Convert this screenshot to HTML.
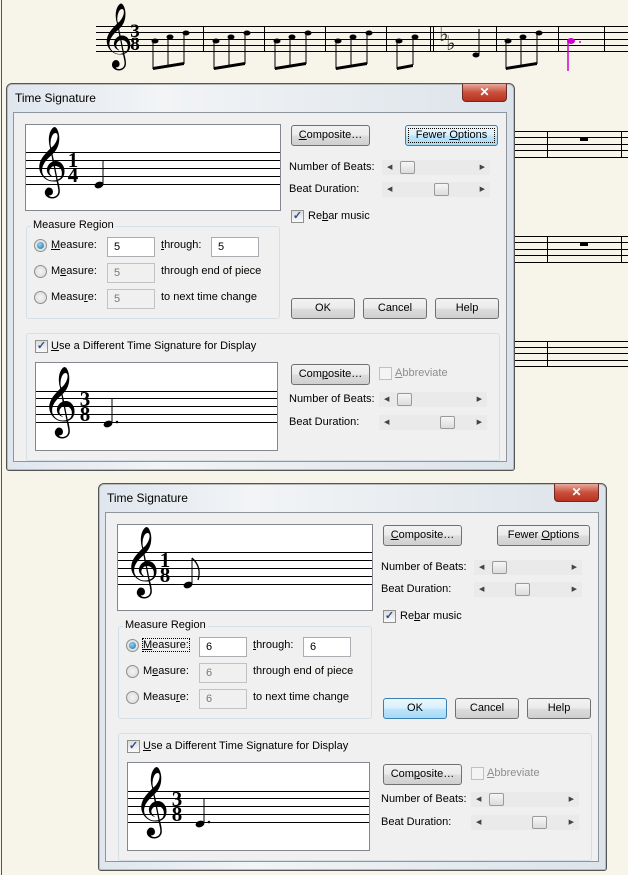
<!DOCTYPE html>
<html><head><meta charset="utf-8">
<style>
*{box-sizing:border-box;margin:0;padding:0}
body{width:628px;height:875px;overflow:hidden;background:#f7f5ea;position:relative;font-family:"Liberation Sans",sans-serif;font-size:11px;color:#000}
.a{position:absolute;white-space:nowrap}
.sl{position:absolute;height:1px;background:#000}
.bl{position:absolute;width:1px;background:#000}
.dlg{position:absolute;width:509px;height:388px;border:1px solid #555;border-radius:6px 6px 3px 3px;background:linear-gradient(90deg,#dfe6ee 0%,#f2f4f6 30%,#e9edf1 60%,#dce3ea 100%);box-shadow:0 0 0 1px #bbb inset}
.ttl{position:absolute;left:8px;top:7px;font-size:12px}
.cls{position:absolute;left:455px;top:0;width:45px;height:18px;border:1px solid #6b2a22;border-top:none;border-radius:0 0 4px 4px;background:linear-gradient(#e8a89d,#c9503c 50%,#b8321e);color:#fff;font-weight:bold;text-align:center;font-size:12px;line-height:17px}
.cli{position:absolute;left:7px;top:29px;width:494px;height:350px;background:#f0f0f0;border:1px solid #8e959c}
.pv{position:absolute;background:#fff;border:1px solid #828790;overflow:hidden}
.grp{position:absolute;border:1px solid #d5dfe5;border-radius:3px}
.gl{position:absolute;background:#f0f0f0;padding:0 2px;top:-8px;left:4px;white-space:nowrap}
.btn{position:absolute;height:21px;border:1px solid #707070;border-radius:3px;background:linear-gradient(#f2f2f2 0%,#ebebeb 50%,#dddddd 51%,#cfcfcf 100%);text-align:center;line-height:19px;white-space:nowrap}
.def{border-color:#3c7fb1;background:linear-gradient(#eaf6fd 0%,#d9f0fc 50%,#bee6fd 51%,#a7d9f5 100%)}
.inp{position:absolute;width:48px;height:20px;border:1px solid #abadb3;background:#fff;padding-left:6px;line-height:18px}
.inp.dis{background:#f0f0f0;color:#777;border-color:#c2c2c2}
.rad{position:absolute;width:13px;height:13px;border-radius:50%;border:1px solid #8e8f8f;background:radial-gradient(#f4f4f4,#d7d7d7)}
.rad.on::after{content:"";position:absolute;left:2px;top:2px;width:7px;height:7px;border-radius:50%;background:radial-gradient(circle at 40% 35%,#8fd3f4,#1b6ea5)}
.chk{position:absolute;width:13px;height:13px;border:1px solid #8e8f8f;background:linear-gradient(#dcdcdc,#fafafa);font-size:11px;line-height:11px;text-align:center;color:#2a4f8f;font-weight:bold}
.chk.dis{border-color:#c0c0c0;background:#f4f4f4}
.sb{position:absolute;width:108px;height:15px;background:#eaeaea}
.sb .l,.sb .r{position:absolute;top:3px;font-size:7px;color:#444}
.sb .l{left:5px}.sb .r{right:5px}
.sb .t{position:absolute;top:1px;width:15px;height:13px;border:1px solid #9a9a9a;border-radius:2px;background:linear-gradient(#f6f6f6,#dcdcdc)}
.clef{position:absolute;font-family:"DejaVu Sans",sans-serif;font-size:60px;line-height:60px}
.ts{position:absolute;font-family:"Liberation Serif",serif;font-weight:bold;font-size:21px;line-height:15px;text-align:center}
u{text-decoration:underline}
</style></head><body>

<div class="bl" style="left:1px;top:0;height:875px;background:#555"></div>

<!-- top staff -->
<div class="sl" style="left:96px;top:26px;width:532px"></div>
<div class="sl" style="left:96px;top:32px;width:532px"></div>
<div class="sl" style="left:96px;top:39px;width:532px"></div>
<div class="sl" style="left:96px;top:45px;width:532px"></div>
<div class="sl" style="left:96px;top:51px;width:532px"></div>
<div class="clef" style="left:100px;top:8px;font-size:56px;line-height:56px">𝄞</div>
<div class="ts" style="left:128px;top:25px;width:14px;font-size:19px;line-height:13px">3<br>8</div>
<div class="bl" style="left:203px;top:26px;height:26px"></div>
<div class="bl" style="left:264px;top:26px;height:26px"></div>
<div class="bl" style="left:325px;top:26px;height:26px"></div>
<div class="bl" style="left:386px;top:26px;height:26px"></div>
<div class="bl" style="left:430px;top:26px;height:26px"></div>
<div class="bl" style="left:433px;top:26px;height:26px"></div>
<div class="bl" style="left:496px;top:26px;height:26px"></div>
<div class="bl" style="left:558px;top:26px;height:26px"></div>
<div class="bl" style="left:604px;top:26px;height:26px"></div>
<svg class="a" style="left:0;top:0" width="628" height="80">
<g fill="#000" stroke="#000">
<g id="tr"><ellipse cx="155" cy="41" rx="3.5" ry="2.5" stroke="none"/><ellipse cx="170" cy="37" rx="3.5" ry="2.5" stroke="none"/><ellipse cx="186" cy="33" rx="3.5" ry="2.5" stroke="none"/><path d="M153 42V69M168 38V67M184 34V64" stroke-width="1"/><path d="M153 67L184 62V65L153 70Z" stroke="none"/></g>
<use href="#tr" x="61"/><use href="#tr" x="122"/><use href="#tr" x="183"/>
<ellipse cx="399" cy="41" rx="3.5" ry="2.5" stroke="none"/><ellipse cx="415" cy="37" rx="3.5" ry="2.5" stroke="none"/><path d="M397 42V69M413 38V65" stroke-width="1"/><path d="M397 67L413 64V67L397 70Z" stroke="none"/>
<use href="#tr" x="353"/>
<ellipse cx="476" cy="55" rx="3.5" ry="2.5" stroke="none"/><path d="M479 54V29" stroke-width="1"/>
</g>
<text x="439" y="41" font-size="20" font-family="DejaVu Sans" fill="#222">♭</text>
<text x="446" y="50" font-size="20" font-family="DejaVu Sans" fill="#222">♭</text>
<ellipse cx="571" cy="41" rx="4" ry="3" fill="#c0c"/><path d="M568 42V71" stroke="#c0c" stroke-width="1.5"/><circle cx="580" cy="42" r="1" fill="#c0c"/>
</svg>

<!-- right staves -->
<div class="sl" style="left:515px;top:131px;width:113px"></div><div class="sl" style="left:515px;top:137px;width:113px"></div><div class="sl" style="left:515px;top:144px;width:113px"></div><div class="sl" style="left:515px;top:150px;width:113px"></div><div class="sl" style="left:515px;top:157px;width:113px"></div>
<div class="bl" style="left:547px;top:131px;height:27px"></div><div class="bl" style="left:621px;top:131px;height:27px"></div>
<div class="a" style="left:580px;top:138px;width:8px;height:3px;background:#000"></div>
<div class="sl" style="left:515px;top:236px;width:113px"></div><div class="sl" style="left:515px;top:242px;width:113px"></div><div class="sl" style="left:515px;top:249px;width:113px"></div><div class="sl" style="left:515px;top:255px;width:113px"></div><div class="sl" style="left:515px;top:262px;width:113px"></div>
<div class="bl" style="left:547px;top:236px;height:27px"></div><div class="bl" style="left:621px;top:236px;height:27px"></div>
<div class="a" style="left:580px;top:243px;width:8px;height:3px;background:#000"></div>
<div class="sl" style="left:515px;top:341px;width:113px"></div><div class="sl" style="left:515px;top:347px;width:113px"></div><div class="sl" style="left:515px;top:353px;width:113px"></div><div class="sl" style="left:515px;top:360px;width:113px"></div><div class="sl" style="left:515px;top:366px;width:113px"></div>
<div class="bl" style="left:547px;top:341px;height:26px"></div>

<!-- DIALOG 1 -->
<div class="dlg" style="left:6px;top:83px">
<div class="ttl">Time Signature</div>
<div class="cls">✕</div>
</div>
<div class="a" style="left:6px;top:83px;width:509px;height:388px">
<div class="cli" style="left:7px;top:29px"></div>
<div class="pv" style="left:19px;top:41px;width:256px;height:87px">
 <div class="sl" style="left:0;top:27px;width:254px"></div><div class="sl" style="left:0;top:35px;width:254px"></div><div class="sl" style="left:0;top:43px;width:254px"></div><div class="sl" style="left:0;top:51px;width:254px"></div><div class="sl" style="left:0;top:59px;width:254px"></div>
 <div class="clef" style="left:6px;top:6px">𝄞</div>
 <div class="ts" style="left:40px;top:28px;width:14px">1<br>4</div>
 <svg class="a" style="left:0;top:0" width="100" height="80"><ellipse cx="73" cy="60" rx="4.5" ry="3.2" fill="#000" transform="rotate(-20 73 60)"/><path d="M77 59V35" stroke="#000"/></svg>
</div>
<div class="grp" style="left:20px;top:143px;width:254px;height:93px"><div class="gl">Measure Region</div></div>
<div class="rad on" style="left:28px;top:156px"></div><div class="a" style="left:45px;top:156px"><u>M</u>easure:</div>
<div class="inp" style="left:101px;top:154px">5</div><div class="a" style="left:155px;top:156px"><u>t</u>hrough:</div>
<div class="inp" style="left:205px;top:154px">5</div>
<div class="rad" style="left:28px;top:182px"></div><div class="a" style="left:45px;top:182px">M<u>e</u>asure:</div>
<div class="inp dis" style="left:101px;top:180px">5</div><div class="a" style="left:155px;top:182px">through end of piece</div>
<div class="rad" style="left:28px;top:208px"></div><div class="a" style="left:45px;top:208px">Measu<u>r</u>e:</div>
<div class="inp dis" style="left:101px;top:206px">5</div><div class="a" style="left:155px;top:208px">to next time change</div>

<div class="btn" style="left:285px;top:42px;width:79px"><u>C</u>omposite…</div>
<div class="btn def" style="left:399px;top:42px;width:93px;outline:1px dotted #000;outline-offset:-4px">Fewer <u>O</u>ptions</div>
<div class="a" style="left:283px;top:78px">Number of Beats:</div>
<div class="sb" style="left:376px;top:77px"><span class="l">◀</span><span class="r">▶</span><div class="t" style="left:18px"></div></div>
<div class="a" style="left:283px;top:100px">Beat Duration:</div>
<div class="sb" style="left:376px;top:99px"><span class="l">◀</span><span class="r">▶</span><div class="t" style="left:52px"></div></div>
<div class="chk" style="left:285px;top:127px">✓</div><div class="a" style="left:302px;top:127px">Re<u>b</u>ar music</div>
<div class="btn" style="left:285px;top:215px;width:64px">OK</div>
<div class="btn" style="left:357px;top:215px;width:64px">Cancel</div>
<div class="btn" style="left:429px;top:215px;width:64px">Help</div>

<div class="grp" style="left:20px;top:250px;width:474px;height:128px"></div>
<div class="chk" style="left:29px;top:257px">✓</div><div class="a" style="left:45px;top:257px"><u>U</u>se a Different Time Signature for Display</div>
<div class="pv" style="left:29px;top:279px;width:243px;height:89px">
 <div class="sl" style="left:0;top:28px;width:241px"></div><div class="sl" style="left:0;top:35px;width:241px"></div><div class="sl" style="left:0;top:43px;width:241px"></div><div class="sl" style="left:0;top:51px;width:241px"></div><div class="sl" style="left:0;top:59px;width:241px"></div>
 <div class="clef" style="left:6px;top:8px">𝄞</div>
 <div class="ts" style="left:42px;top:29px;width:14px">3<br>8</div>
 <svg class="a" style="left:0;top:0" width="100" height="80"><ellipse cx="72" cy="61" rx="4.5" ry="3.2" fill="#000" transform="rotate(-20 72 61)"/><path d="M76 60V36" stroke="#000"/><circle cx="81" cy="59" r="1.3"/></svg>
</div>
<div class="btn" style="left:285px;top:281px;width:79px">Com<u>p</u>osite…</div>
<div class="chk dis" style="left:373px;top:284px"></div><div class="a" style="left:389px;top:284px;color:#8d8d8d"><u>A</u>bbreviate</div>
<div class="a" style="left:283px;top:310px">Number of Beats:</div>
<div class="sb" style="left:373px;top:309px"><span class="l">◀</span><span class="r">▶</span><div class="t" style="left:18px"></div></div>
<div class="a" style="left:283px;top:333px">Beat Duration:</div>
<div class="sb" style="left:373px;top:332px"><span class="l">◀</span><span class="r">▶</span><div class="t" style="left:61px"></div></div>
</div>

<!-- DIALOG 2 -->
<div class="dlg" style="left:98px;top:483px">
<div class="ttl">Time Signature</div>
<div class="cls">✕</div>
</div>
<div class="a" style="left:98px;top:483px;width:509px;height:388px">
<div class="cli" style="left:7px;top:29px"></div>
<div class="pv" style="left:19px;top:41px;width:256px;height:87px">
 <div class="sl" style="left:0;top:27px;width:254px"></div><div class="sl" style="left:0;top:35px;width:254px"></div><div class="sl" style="left:0;top:43px;width:254px"></div><div class="sl" style="left:0;top:51px;width:254px"></div><div class="sl" style="left:0;top:59px;width:254px"></div>
 <div class="clef" style="left:6px;top:6px">𝄞</div>
 <div class="ts" style="left:40px;top:28px;width:14px">1<br>8</div>
 <svg class="a" style="left:0;top:0" width="100" height="80"><ellipse cx="70" cy="60" rx="4.5" ry="3.2" fill="#000" transform="rotate(-20 70 60)"/><path d="M74 59V33" stroke="#000"/><path d="M74 33Q84 42 80 55" stroke="#000" fill="none" stroke-width="1.3"/></svg>
</div>
<div class="grp" style="left:20px;top:143px;width:254px;height:93px"><div class="gl">Measure Region</div></div>
<div class="rad on" style="left:28px;top:156px"></div><div class="a" style="left:45px;top:156px;outline:1px dotted #000"><u>M</u>easure:</div>
<div class="inp" style="left:101px;top:154px">6</div><div class="a" style="left:155px;top:156px"><u>t</u>hrough:</div>
<div class="inp" style="left:205px;top:154px">6</div>
<div class="rad" style="left:28px;top:182px"></div><div class="a" style="left:45px;top:182px">M<u>e</u>asure:</div>
<div class="inp dis" style="left:101px;top:180px">6</div><div class="a" style="left:155px;top:182px">through end of piece</div>
<div class="rad" style="left:28px;top:208px"></div><div class="a" style="left:45px;top:208px">Measu<u>r</u>e:</div>
<div class="inp dis" style="left:101px;top:206px">6</div><div class="a" style="left:155px;top:208px">to next time change</div>

<div class="btn" style="left:285px;top:42px;width:79px"><u>C</u>omposite…</div>
<div class="btn" style="left:399px;top:42px;width:93px">Fewer <u>O</u>ptions</div>
<div class="a" style="left:283px;top:78px">Number of Beats:</div>
<div class="sb" style="left:376px;top:77px"><span class="l">◀</span><span class="r">▶</span><div class="t" style="left:18px"></div></div>
<div class="a" style="left:283px;top:100px">Beat Duration:</div>
<div class="sb" style="left:376px;top:99px"><span class="l">◀</span><span class="r">▶</span><div class="t" style="left:41px"></div></div>
<div class="chk" style="left:285px;top:127px">✓</div><div class="a" style="left:302px;top:127px">Re<u>b</u>ar music</div>
<div class="btn def" style="left:285px;top:215px;width:64px">OK</div>
<div class="btn" style="left:357px;top:215px;width:64px">Cancel</div>
<div class="btn" style="left:429px;top:215px;width:64px">Help</div>

<div class="grp" style="left:20px;top:250px;width:474px;height:128px"></div>
<div class="chk" style="left:29px;top:257px">✓</div><div class="a" style="left:45px;top:257px"><u>U</u>se a Different Time Signature for Display</div>
<div class="pv" style="left:29px;top:279px;width:243px;height:89px">
 <div class="sl" style="left:0;top:28px;width:241px"></div><div class="sl" style="left:0;top:35px;width:241px"></div><div class="sl" style="left:0;top:43px;width:241px"></div><div class="sl" style="left:0;top:51px;width:241px"></div><div class="sl" style="left:0;top:59px;width:241px"></div>
 <div class="clef" style="left:6px;top:8px">𝄞</div>
 <div class="ts" style="left:42px;top:29px;width:14px">3<br>8</div>
 <svg class="a" style="left:0;top:0" width="100" height="80"><ellipse cx="72" cy="61" rx="4.5" ry="3.2" fill="#000" transform="rotate(-20 72 61)"/><path d="M76 60V36" stroke="#000"/><circle cx="81" cy="59" r="1.3"/></svg>
</div>
<div class="btn" style="left:285px;top:281px;width:79px">Com<u>p</u>osite…</div>
<div class="chk dis" style="left:373px;top:284px"></div><div class="a" style="left:389px;top:284px;color:#8d8d8d"><u>A</u>bbreviate</div>
<div class="a" style="left:283px;top:310px">Number of Beats:</div>
<div class="sb" style="left:373px;top:309px"><span class="l">◀</span><span class="r">▶</span><div class="t" style="left:18px"></div></div>
<div class="a" style="left:283px;top:333px">Beat Duration:</div>
<div class="sb" style="left:373px;top:332px"><span class="l">◀</span><span class="r">▶</span><div class="t" style="left:61px"></div></div>
</div>

</body></html>
